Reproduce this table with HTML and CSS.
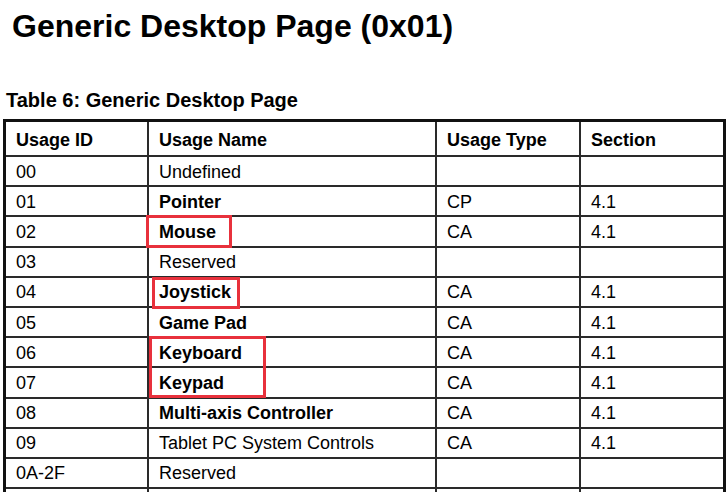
FILE: index.html
```html
<!DOCTYPE html>
<html lang="en">
<head>
<meta charset="utf-8">
<title>Generic Desktop Page (0x01)</title>
<link rel="stylesheet" href="styles.css">
</head>
<body>
<main class="page">
  <h1 class="title">Generic Desktop Page (0x01)</h1>
  <h2 class="caption">Table 6: Generic Desktop Page</h2>
  <div class="table-wrap">
    <table class="usage-table">
      <colgroup>
        <col class="c-id"><col class="c-name"><col class="c-type"><col class="c-sec">
      </colgroup>
      <thead>
        <tr><th>Usage ID</th><th>Usage Name</th><th>Usage Type</th><th>Section</th></tr>
      </thead>
      <tbody>
        <tr><td>00</td><td>Undefined</td><td></td><td></td></tr>
        <tr><td>01</td><td class="b">Pointer</td><td>CP</td><td>4.1</td></tr>
        <tr><td>02</td><td class="b">Mouse</td><td>CA</td><td>4.1</td></tr>
        <tr><td>03</td><td>Reserved</td><td></td><td></td></tr>
        <tr><td>04</td><td class="b">Joystick</td><td>CA</td><td>4.1</td></tr>
        <tr><td>05</td><td class="b">Game Pad</td><td>CA</td><td>4.1</td></tr>
        <tr><td>06</td><td class="b">Keyboard</td><td>CA</td><td>4.1</td></tr>
        <tr><td>07</td><td class="b">Keypad</td><td>CA</td><td>4.1</td></tr>
        <tr><td>08</td><td class="b">Multi-axis Controller</td><td>CA</td><td>4.1</td></tr>
        <tr><td>09</td><td>Tablet PC System Controls</td><td>CA</td><td>4.1</td></tr>
        <tr><td>0A-2F</td><td>Reserved</td><td></td><td></td></tr>
        <tr><td></td><td></td><td></td><td></td></tr>
      </tbody>
    </table>
    <div class="mark mark-mouse"></div>
    <div class="mark mark-joystick"></div>
    <div class="mark mark-keys"></div>
  </div>
</main>
</body>
</html>
```
FILE: styles.css
```css
html, body {
  margin: 0;
  padding: 0;
  background: #fff;
  overflow: hidden;
}
body {
  font-family: "Liberation Sans", Arial, sans-serif;
  color: #000;
}
.page {
  padding: 0 0 0 3px;
}
.title {
  margin: 0;
  padding: 8px 0 0 9px;
  font-size: 32px;
  line-height: 37px;
  font-weight: bold;
}
.caption {
  margin: 0;
  padding: 44px 0 0 3px;
  font-size: 20px;
  line-height: 23px;
  font-weight: bold;
}
.table-wrap {
  position: relative;
  margin-top: 7px;
  width: 723px;
}
.usage-table {
  border-collapse: separate;
  border-spacing: 0;
  width: 723px;
  table-layout: fixed;
  border: 3px solid #111;
  font-size: 18px;
}
.c-id { width: 143px; }
.c-name { width: 288px; }
.c-type { width: 144px; }
.c-sec { width: 142px; }
.usage-table th,
.usage-table td {
  border: 0;
  border-right: 2px solid #2a2a2a;
  border-bottom: 2px solid #2a2a2a;
  padding: 2px 0 0 10px;
  text-align: left;
  vertical-align: middle;
  white-space: nowrap;
}
.usage-table th {
  padding-top: 4px;
}
.usage-table th:last-child,
.usage-table td:last-child {
  border-right: 0;
}
.usage-table thead tr {
  height: 35px;
}
.usage-table tbody tr {
  height: 30.2px;
}
.usage-table th {
  font-weight: bold;
}
.usage-table td {
  font-weight: normal;
}
.usage-table td.b {
  font-weight: bold;
}
.mark {
  position: absolute;
  border: 3px solid #e8313c;
  box-sizing: border-box;
}
.mark-mouse { left: 143px; top: 96px; width: 86px; height: 33px; }
.mark-joystick { left: 149px; top: 158px; width: 88px; height: 32px; }
.mark-keys { left: 146px; top: 217px; width: 117px; height: 62px; }
```
